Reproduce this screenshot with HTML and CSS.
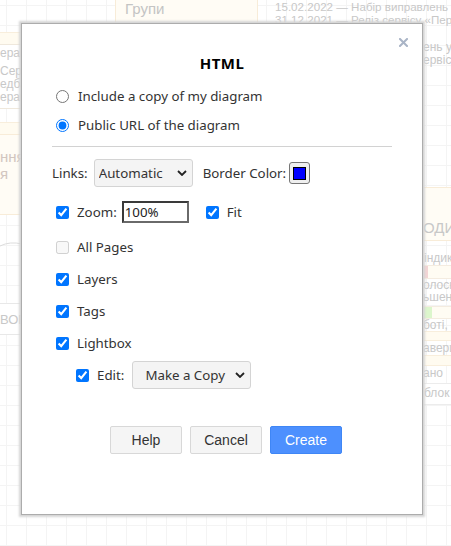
FILE: index.html
```html
<!DOCTYPE html>
<html lang="en">
<head>
<meta charset="utf-8">
<title>HTML export</title>
<link rel="stylesheet" href="styles.css">
</head>
<body>
<div class="canvas">
  <div class="bg-box box-groups"></div>
  <div class="bg-text t-groups">Групи</div>
  <div class="bg-text t-news1">15.02.2022 — Набір виправлень</div>
  <div class="bg-text t-news2">31.12.2021 — Реліз сервісу «Перед</div>
  <div class="bg-text t-r1">ень у</div>
  <div class="bg-text t-r2">ервіс</div>

  <div class="bg-box box-r-head"></div>
  <div class="bg-text t-rhead">ОДИ І</div>
  <div class="bg-text t-r3">індик</div>
  <div class="bg-bar bar-1"><span class="seg seg-pink"></span></div>
  <div class="bg-text t-r4">олоск</div>
  <div class="bg-text t-r5">ьшенн</div>
  <div class="bg-bar bar-2"><span class="seg seg-green"></span></div>
  <div class="bg-text t-r6">боті, з</div>
  <div class="bg-band band-r1"></div>
  <div class="bg-text t-r7">аверц</div>
  <div class="bg-band band-r2"></div>
  <div class="bg-text t-r8">ано</div>
  <div class="bg-box box-r-foot"></div>
  <div class="bg-text t-r9">блок</div>

  <div class="bg-band band-l1"></div>
  <div class="bg-box box-l1"></div>
  <div class="bg-text t-l1">ераці</div>
  <div class="bg-text t-l2">Серв</div>
  <div class="bg-text t-l3">едба</div>
  <div class="bg-text t-l4">ераці</div>
  <div class="bg-band band-l2"></div>
  <div class="bg-box box-l2"></div>
  <div class="bg-text t-l5">ння</div>
  <div class="bg-text t-l6">я</div>
  <svg class="bg-curve" width="22" height="20" viewBox="0 0 22 20"><path d="M0 15 Q10 10 22 13" fill="none" stroke="#dcdcdc" stroke-width="1"/></svg>
  <div class="bg-box box-l3"></div>
  <div class="bg-text t-l7">ВОВІ</div>
</div>

<div class="dialog" role="dialog" aria-label="HTML">
  <button class="close" type="button" aria-label="Close">
    <svg width="9" height="9" viewBox="0 0 9 9"><path d="M1 1 L8 8 M8 1 L1 8" stroke="#a9b4c6" stroke-width="2" stroke-linecap="square"/></svg>
  </button>
  <div class="title">HTML</div>

  <label class="row opt r1"><input class="radio" type="radio" name="src">Include a copy of my diagram</label>
  <label class="row opt r2"><input class="radio" type="radio" name="src" checked>Public URL of the diagram</label>

  <hr class="sep">

  <div class="row links-row">
    <span class="lbl">Links:</span>
    <span class="selwrap sel-links">
      <select class="sel"><option>Automatic</option><option>Blank</option><option>Self</option></select>
      <svg class="chev" width="10" height="6" viewBox="0 0 10 6"><path d="M1 1 L5 5 L9 1" fill="none" stroke="#222" stroke-width="1.8"/></svg>
    </span>
    <span class="lbl bc-label">Border Color:</span>
    <span class="color-btn"><span class="swatch"></span></span>
  </div>

  <div class="row zoom-row">
    <label class="chk"><input class="cb" type="checkbox" checked>Zoom:</label>
    <input class="zoom-input" type="text" value="100%">
    <label class="chk fit"><input class="cb" type="checkbox" checked>Fit</label>
  </div>

  <label class="row opt allpages"><input class="cb" type="checkbox" disabled>All Pages</label>
  <label class="row opt gap12"><input class="cb" type="checkbox" checked>Layers</label>
  <label class="row opt gap12"><input class="cb" type="checkbox" checked>Tags</label>
  <label class="row opt gap12"><input class="cb" type="checkbox" checked>Lightbox</label>

  <div class="row edit-row">
    <label class="chk"><input class="cb" type="checkbox" checked>Edit:</label>
    <span class="selwrap sel-edit">
      <select class="sel"><option>Make a Copy</option><option>Replace Existing</option></select>
      <svg class="chev" width="10" height="6" viewBox="0 0 10 6"><path d="M1 1 L5 5 L9 1" fill="none" stroke="#222" stroke-width="1.8"/></svg>
    </span>
  </div>

  <div class="buttons">
    <button class="btn" type="button">Help</button>
    <button class="btn" type="button">Cancel</button>
    <button class="btn primary" type="button">Create</button>
  </div>
</div>
</body>
</html>
```

FILE: styles.css
```css
html, body {
  margin: 0;
  padding: 0;
}
body {
  width: 451px;
  height: 546px;
  overflow: hidden;
  position: relative;
  background: #ffffff;
  font-family: "Noto Sans", "Open Sans", sans-serif;
  color: #333;
}

/* ---------- faded diagram canvas ---------- */
.canvas {
  position: absolute;
  left: 0; top: 0; right: 0; bottom: 0;
  overflow: hidden;
  background-image:
    linear-gradient(to right, #f4f4f4 1px, transparent 1px),
    linear-gradient(to bottom, #f4f4f4 1px, transparent 1px);
  background-size: 20px 20px;
  background-position: 6px 5px;
}
.bg-box {
  position: absolute;
  background: #fffcf5;
  border: 1px solid #f8ecd8;
}
.bg-band {
  position: absolute;
  background: #fffbf0;
  border-top: 1px solid #f8eedc;
  border-bottom: 1px solid #f8eedc;
}
.bg-bar {
  position: absolute;
  background: #fffcf3;
  border: 1px solid #f4ece0;
}
.seg { position: absolute; top: 0; bottom: 0; left: 0; }
.seg-pink { width: 4px; background: #f3d4d4; }
.seg-green { width: 8px; background: #dcf6cc; }
.bg-text {
  position: absolute;
  font-family: "Liberation Sans", Arial, sans-serif;
  font-size: 12px;
  line-height: 11px;
  color: #c8c8c8;
  white-space: nowrap;
}
.box-groups { left: 115px; top: -20px; width: 141px; height: 42px; }
.t-groups { left: 125px; top: 1px; font-size: 15px; line-height: 16px; color: #c4c4c4; }
.t-news1 { left: 275px; top: 1px; font-size: 11.6px; }
.t-news2 { left: 275px; top: 14px; font-size: 11.6px; }
.t-r1 { left: 423px; top: 42px; }
.t-r2 { left: 423px; top: 55px; }
.box-r-head { left: 420px; top: 187px; width: 40px; height: 52px; }
.t-rhead { left: 423px; top: 220px; font-size: 15px; line-height: 16px; }
.t-r3 { left: 424px; top: 253px; }
.bar-1 { left: 420px; top: 265px; width: 40px; height: 12px; }
.bar-1 .seg-pink { left: 3px; }
.t-r4 { left: 423px; top: 280px; }
.t-r5 { left: 423px; top: 292px; }
.bar-2 { left: 420px; top: 306px; width: 40px; height: 11px; }
.bar-2 .seg-green { left: 3px; }
.t-r6 { left: 423px; top: 320px; }
.band-r1 { left: 420px; top: 331px; width: 40px; height: 8px; }
.t-r7 { left: 423px; top: 343px; }
.band-r2 { left: 420px; top: 355px; width: 40px; height: 9px; }
.t-r8 { left: 423px; top: 368px; }
.box-r-foot { left: 420px; top: 383px; width: 40px; height: 20px; background: #fff; border-color: #ececec; }
.t-r9 { left: 424px; top: 388px; }

.band-l1 { left: -2px; top: 32px; width: 26px; height: 11px; }
.box-l1 { left: -2px; top: 44px; width: 26px; height: 63px; background: #fff; border-color: #efe8dc; }
.t-l1 { left: 0; top: 48px; }
.t-l2 { left: 0; top: 66px; }
.t-l3 { left: 0; top: 79px; }
.t-l4 { left: 0; top: 92px; }
.band-l2 { left: -2px; top: 122px; width: 26px; height: 11px; }
.box-l2 { left: -2px; top: 134px; width: 26px; height: 79px; }
.t-l5 { left: 0; top: 149px; font-size: 15px; line-height: 16px; color: #d2c6c0; }
.t-l6 { left: 0; top: 166px; font-size: 15px; line-height: 16px; color: #d2c6c0; }
.bg-curve { position: absolute; left: 0; top: 231px; }
.box-l3 { left: -2px; top: 303px; width: 26px; height: 30px; background: #fff; border-color: #e8e8e8; }
.t-l7 { left: 0; top: 313px; font-size: 13px; line-height: 14px; }

/* ---------- dialog ---------- */
.dialog {
  position: absolute;
  left: 21px;
  top: 23px;
  width: 340px;
  height: 430px;
  padding: 30px;
  background: #ffffff;
  border: 1px solid #acacac;
  box-shadow: 0 0 2px 2px #d5d5d5;
  display: flex;
  flex-direction: column;
  font-size: 13.3px;
}
.close {
  position: absolute;
  left: 377px;
  top: 14px;
  width: 9px;
  height: 9px;
  padding: 0;
  margin: 0;
  border: 0;
  background: transparent;
  display: block;
}
.close svg { display: block; }

.title {
  height: 18px;
  line-height: 18px;
  text-align: center;
  font-weight: 700;
  font-size: 15px;
  color: #000;
  letter-spacing: 0.5px;
}

.row {
  display: flex;
  align-items: center;
  white-space: nowrap;
}
.opt { height: 20px; }
.r1 { margin-top: 14px; }
.r2 { margin-top: 9px; }

.radio {
  width: 13px;
  height: 13px;
  margin: 0 9px 0 4px;
  flex: none;
}
.cb {
  width: 13px;
  height: 13px;
  margin: 0 8px 0 4px;
  flex: none;
  accent-color: #0075ff;
}

.sep {
  margin: 11px 0 0;
  height: 0;
  border: 0;
  border-top: 1px solid #d2d2d2;
}

.links-row { margin-top: 12px; height: 28px; }
.lbl { display: inline-block; }
.selwrap {
  position: relative;
  display: inline-block;
  height: 28px;
  margin-left: 8px;
}
.sel {
  appearance: none;
  -webkit-appearance: none;
  box-sizing: border-box;
  height: 28px;
  width: 100%;
  margin: 0;
  padding: 0 20px 0 4px;
  border: 1px solid #d4d4d4;
  border-radius: 3px;
  background: #f4f4f4;
  font-family: "Noto Sans", "Open Sans", sans-serif;
  font-size: 13.3px;
  color: #333;
}
.chev {
  position: absolute;
  right: 6px;
  top: 11px;
  pointer-events: none;
}
.sel-links { width: 99px; margin-left: 6px; }
.bc-label { margin-left: 10px; }
.color-btn {
  box-sizing: border-box;
  width: 21px;
  height: 22px;
  margin-left: 3px;
  border: 1px solid #767676;
  border-radius: 3px;
  background: #efefef;
  display: flex;
  align-items: center;
  justify-content: center;
}
.swatch {
  box-sizing: border-box;
  width: 13px;
  height: 13px;
  background: #0000ff;
  border: 1px solid #000;
}

.zoom-row { margin-top: 14px; height: 22px; }
.chk {
  display: inline-flex;
  align-items: center;
}
.zoom-input {
  box-sizing: border-box;
  width: 67px;
  height: 22px;
  margin: 0 0 0 5px;
  padding: 0 1px;
  border: 2px solid #3a3a3a;
  border-right-color: #6a6a6a;
  border-bottom-color: #6a6a6a;
  font-family: "Noto Sans", "Open Sans", sans-serif;
  font-size: 13.3px;
  color: #222;
  background: #fff;
  outline: none;
}
.fit { margin-left: 13px; }

.allpages { margin-top: 14px; }
.gap12 { margin-top: 12px; }

.edit-row { margin-top: 8px; height: 28px; padding-left: 20px; }
.sel-edit { width: 119px; margin-left: 8px; }
.sel-edit .sel { padding-left: 12px; }

.buttons {
  margin-top: 37px;
  height: 28px;
  display: flex;
  justify-content: center;
  gap: 8px;
  padding-left: 8px;
}
.btn {
  box-sizing: border-box;
  width: 72px;
  height: 28px;
  margin: 0;
  padding: 0 8px;
  border: 1px solid #d8d8d8;
  border-radius: 2px;
  background: #f5f5f5;
  color: #333;
  font-family: "Liberation Sans", Arial, sans-serif;
  font-size: 14px;
}
.btn.primary {
  background: #4d90fe;
  border-color: #3f86f5;
  color: #fff;
}
```
